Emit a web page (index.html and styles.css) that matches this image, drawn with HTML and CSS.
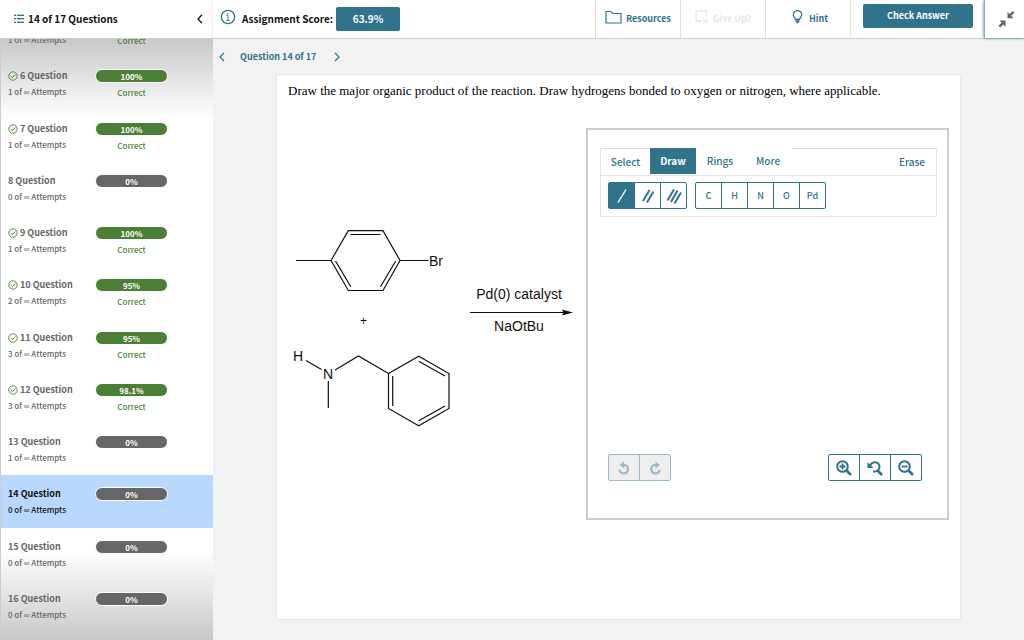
FILE: index.html
```html
<!DOCTYPE html>
<html lang="en">
<head>
<meta charset="utf-8">
<meta name="viewport" content="width=device-width, initial-scale=1">
<title>Question 14 of 17</title>
<link rel="stylesheet" href="styles.css">
</head>
<body>
<svg class="defs" aria-hidden="true">
  <symbol id="check" viewBox="0 0 10 10"><circle cx="5" cy="5" r="4.2" fill="none" stroke="currentColor" stroke-width=".9"/><path d="M2.8 5.2 4.4 6.7 7.3 3.4" fill="none" stroke="currentColor" stroke-width="1"/></symbol>
</svg>
<header class="topbar">
  <div class="topbar-list">
    <svg class="icon" width="10" height="10" viewBox="0 0 10 10" fill="#31738a" aria-hidden="true"><path d="M0 1h2v1H0zM3 1h7v1H3zM0 4h2v1H0zM3 4h7v1H3zM0 8h2v1H0zM3 8h7v1H3z"/><path d="M0 .4h2v1H0zM3 .4h7v1H3zM0 4.400h2v1H0zM3 4.400h7v1H3zM0 7.600h2v1H0zM3 7.600h7v1H3z" opacity=".7"/></svg>
    <h1 class="topbar-title">14 of 17 Questions</h1>
    <button class="bare collapse-list" type="button" aria-label="Collapse question list"><svg width="6" height="10" viewBox="0 0 6 10" fill="none" stroke="#111" stroke-width="1.300"><path d="M5 .8 1 5l4 4.200"/></svg></button>
  </div>
  <div class="score">
    <button class="bare info" type="button" aria-label="Score information"><svg width="16" height="16" viewBox="0 0 16 16" fill="none" stroke="#31738a"><circle cx="8" cy="8" r="6.700" stroke-width="1.300"/><path d="M6.500 6.500H8v5M6.300 11.500h3.500" stroke-width="1"/><path d="M7.300 4.500h1.300" stroke-width="1.300"/></svg></button>
    <span class="score-label">Assignment Score:</span>
    <button class="solid score-value" type="button">63.9%</button>
  </div>
  <div class="actions">
    <button class="action" type="button"><svg width="17" height="14" viewBox="0 0 17 14" fill="none" stroke="currentColor" stroke-width="1.200"><path d="M1 1.500h5l1.500 2H16V13H1z"/></svg>Resources</button>
    <button class="action" type="button" disabled><svg width="14" height="14" viewBox="0 0 14 14" fill="none" stroke="currentColor" stroke-width="1.300"><path d="M11.300 7V1H1v10h6M8.500 9.200l4 4M12.500 9.200l-4 4"/></svg>Give Up?</button>
    <button class="action hint" type="button"><svg width="11" height="14" viewBox="0 0 11 14" fill="none" stroke="currentColor" stroke-width="1.300"><path d="M3.500 9.500C3.500 8 1.300 7.200 1.300 4.800a4.200 4.200 0 0 1 8.400 0C9.700 7.200 7.500 8 7.500 9.500z"/><path d="M3.500 11h4M4.300 12.500h2.400"/></svg>Hint</button>
    <div class="action-check"><button class="solid check-answer" type="button">Check Answer</button></div>
    <button class="bare shrink" type="button" aria-label="Exit full screen"><svg width="17" height="17" viewBox="0 0 17 17" fill="#666"><path d="M9.500 1 11.500 3 14.800 0 16.500 1.700 13.200 4.800 15.500 7.200H9.500zM7.500 9.500v6.200L5.300 13.500 2.200 16.500.5 14.800 3.600 11.800 1.500 9.500z"/></svg></button>
  </div>
</header>
<div class="body">
  <aside class="sidebar" aria-label="Questions">
    <ol class="questions">
      <li class="question"><div><p class="q-title"><svg><use href="#check"/></svg>5 Question</p><p class="q-tries">1 of <span class="inf">∞</span> Attempts</p></div><div class="q-result"><span class="pill good">100%</span><span class="verdict">Correct</span></div></li>
      <li class="question"><div><p class="q-title"><svg><use href="#check"/></svg>6 Question</p><p class="q-tries">1 of <span class="inf">∞</span> Attempts</p></div><div class="q-result"><span class="pill good">100%</span><span class="verdict">Correct</span></div></li>
      <li class="question"><div><p class="q-title"><svg><use href="#check"/></svg>7 Question</p><p class="q-tries">1 of <span class="inf">∞</span> Attempts</p></div><div class="q-result"><span class="pill good">100%</span><span class="verdict">Correct</span></div></li>
      <li class="question"><div><p class="q-title">8 Question</p><p class="q-tries">0 of <span class="inf">∞</span> Attempts</p></div><div class="q-result"><span class="pill">0%</span></div></li>
      <li class="question"><div><p class="q-title"><svg><use href="#check"/></svg>9 Question</p><p class="q-tries">1 of <span class="inf">∞</span> Attempts</p></div><div class="q-result"><span class="pill good">100%</span><span class="verdict">Correct</span></div></li>
      <li class="question"><div><p class="q-title"><svg><use href="#check"/></svg>10 Question</p><p class="q-tries">2 of <span class="inf">∞</span> Attempts</p></div><div class="q-result"><span class="pill good">95%</span><span class="verdict">Correct</span></div></li>
      <li class="question"><div><p class="q-title"><svg><use href="#check"/></svg>11 Question</p><p class="q-tries">3 of <span class="inf">∞</span> Attempts</p></div><div class="q-result"><span class="pill good">95%</span><span class="verdict">Correct</span></div></li>
      <li class="question"><div><p class="q-title"><svg><use href="#check"/></svg>12 Question</p><p class="q-tries">3 of <span class="inf">∞</span> Attempts</p></div><div class="q-result"><span class="pill good">98.1%</span><span class="verdict">Correct</span></div></li>
      <li class="question"><div><p class="q-title">13 Question</p><p class="q-tries">1 of <span class="inf">∞</span> Attempts</p></div><div class="q-result"><span class="pill">0%</span></div></li>
      <li class="question current" aria-current="true"><div><p class="q-title">14 Question</p><p class="q-tries">0 of <span class="inf">∞</span> Attempts</p></div><div class="q-result"><span class="pill">0%</span></div></li>
      <li class="question"><div><p class="q-title">15 Question</p><p class="q-tries">0 of <span class="inf">∞</span> Attempts</p></div><div class="q-result"><span class="pill">0%</span></div></li>
      <li class="question"><div><p class="q-title">16 Question</p><p class="q-tries">0 of <span class="inf">∞</span> Attempts</p></div><div class="q-result"><span class="pill">0%</span></div></li>
    </ol>
  </aside>
  <main class="main">
    <nav class="pager" aria-label="Question">
      <button class="bare" type="button" aria-label="Previous question"><svg width="6" height="10" viewBox="0 0 6 10" fill="none" stroke="#31738a" stroke-width="1.200"><path d="M5 1 1 5l4 4"/></svg></button>
      <span class="pager-label">Question 14 of 17</span>
      <button class="bare" type="button" aria-label="Next question"><svg width="6" height="10" viewBox="0 0 6 10" fill="none" stroke="#31738a" stroke-width="1.200"><path d="m1 1 4 4-4 4"/></svg></button>
    </nav>
    <section class="panel">
      <p class="prompt">Draw the major organic product of the reaction. Draw hydrogens bonded to oxygen or nitrogen, where applicable.</p>
      <div class="work">
        <svg class="scheme" width="290" height="210" viewBox="288 222 290 210" role="img" aria-label="Reaction scheme">
          <g fill="none" stroke="#111" stroke-width="1.200">
            <path d="M296 260.500h35M331 260.500 348.300 230.700h34.700L400 260.500 383 290.500H348.300zM400 260.500h28.500M350.500 234.500H380.500M335.500 261 350.800 286.700M395.700 261 380.500 286.700"/>
            <path d="M306 360.500 321.500 369.500M335 370 358.500 356 388.500 373.500M328.300 381v27M388.500 373.500 418.700 356.200 449 373.500V408.500L418.700 425.700 388.500 408.500zM392.700 376v30M418.700 361.200 445 376M418.700 420.800 445 406"/>
            <path d="M470 312.500h95"/>
          </g>
          <path d="m573 312.500-11-3 1.500 3-1.500 3z" fill="#111"/>
          <g class="atoms">
            <text x="429" y="266">Br</text>
            <text x="293" y="361">H</text>
            <text x="323" y="379">N</text>
            <text x="360" y="325" class="plus">+</text>
            <text x="519" y="299" text-anchor="middle">Pd(0) catalyst</text>
            <text x="519" y="331" text-anchor="middle">NaOtBu</text>
          </g>
        </svg>
        <div class="editor">
          <div class="toolbar">
            <div class="tabs">
              <button class="tab edge" type="button">Select</button>
              <button class="tab active" type="button">Draw</button>
              <button class="tab" type="button">Rings</button>
              <button class="tab" type="button">More</button>
              <div class="tabs-end"><button class="tab" type="button">Erase</button></div>
            </div>
            <div class="tools">
              <div class="group">
                <button class="tool active" type="button" aria-label="Single bond"><svg width="14" height="16" viewBox="0 0 14 16" fill="none" stroke="currentColor" stroke-width="1.400"><path d="m3 14.500 8-13"/></svg></button>
                <button class="tool" type="button" aria-label="Double bond"><svg width="14" height="16" viewBox="0 0 14 16" fill="none" stroke="currentColor" stroke-width="2"><path d="M2 13 8.500 2M6 14.500 12.500 3.500"/></svg></button>
                <button class="tool" type="button" aria-label="Triple bond"><svg width="16" height="16" viewBox="0 0 16 16" fill="none" stroke="currentColor" stroke-width="2"><path d="M1.500 12.500 8 1.500M5 14 11.500 2.500M8.500 15.500 15 4.500"/></svg></button>
              </div>
              <div class="group">
                <button class="tool" type="button">C</button>
                <button class="tool" type="button">H</button>
                <button class="tool" type="button">N</button>
                <button class="tool" type="button">O</button>
                <button class="tool" type="button">Pd</button>
              </div>
            </div>
          </div>
          <div class="footer">
            <div class="group">
              <button class="tool wide" type="button" disabled aria-label="Undo"><svg width="14" height="14" viewBox="0 0 14 14" fill="none" stroke="currentColor" stroke-width="2.200"><path d="M5.500 4H7.500a4.200 4.200 0 1 1-5 4.500"/><path d="M7 .5v7L2.500 4z" fill="currentColor" stroke="none"/></svg></button>
              <button class="tool wide" type="button" disabled aria-label="Redo"><svg width="14" height="14" viewBox="0 0 14 14" fill="none" stroke="currentColor" stroke-width="2.200"><path d="M8.500 4H7a4.200 4.200 0 1 0 4.600 5"/><path d="M7.500 .5v7L12 4z" fill="currentColor" stroke="none"/></svg></button>
            </div>
            <div class="group">
              <button class="tool wide" type="button" aria-label="Zoom in"><svg width="16" height="16" viewBox="0 0 16 16" fill="none" stroke="currentColor" stroke-width="2"><circle cx="6.500" cy="6.500" r="5.300"/><path d="m10.500 10.500 4.500 4.500" stroke-width="2.600"/><path d="M3.500 6.500h6M6.500 3.500v6" stroke-width="1.800"/></svg></button>
              <button class="tool wide" type="button" aria-label="Reset zoom"><svg width="16" height="16" viewBox="0 0 16 16" fill="none" stroke="currentColor" stroke-width="2"><path d="M3.500 5a4.700 4.700 0 1 1 5 6.500H6"/><path d="m10.500 10.500 4.500 4.500" stroke-width="2.600"/><path d="M.5 2v6h6z" fill="currentColor" stroke="none"/></svg></button>
              <button class="tool wide" type="button" aria-label="Zoom out"><svg width="16" height="16" viewBox="0 0 16 16" fill="none" stroke="currentColor" stroke-width="2"><circle cx="6.500" cy="6.500" r="5.300"/><path d="m10.500 10.500 4.500 4.500" stroke-width="2.600"/><path d="M3.500 6.500h6" stroke-width="1.800"/></svg></button>
            </div>
          </div>
        </div>
      </div>
    </section>
  </main>
</div>
</body>
</html>
```
FILE: styles.css
```css
:root {
  --teal: #31738a;
  --grey: #666;
  --green: #4b7f36;
  --line: #ccc;
}
* { box-sizing: border-box; }
body {
  margin: 0;
  height: 100vh;
  display: flex;
  flex-direction: column;
  background: #f2f2f2;
  color: #111;
  font: 10px/14px "Noto Sans CJK SC", "Noto Sans", sans-serif;
  overflow: hidden;
}
p, h1, ol { margin: 0; padding: 0; }
svg { display: block; flex: none; }
.defs { display: none; }
button { font: inherit; color: inherit; margin: 0; padding: 0; cursor: pointer; }
.bare { border: 0; background: none; }
.solid {
  border: 0;
  border-radius: 2px;
  background: var(--teal);
  color: #fff;
  font-weight: 700;
}

.topbar {
  flex: none;
  display: flex;
  height: 39px;
  background: #fff;
  border-bottom: 1px solid var(--line);
}
.topbar-list {
  flex: none;
  width: 213px;
  display: flex;
  align-items: center;
  gap: 4px;
  padding: 0 9px 0 14px;
  border-right: 1px solid #f2f2f2;
}
.topbar-title { font-size: 10px; font-weight: 700; }
.collapse-list { margin-left: auto; }
.score { flex: 1; display: flex; align-items: center; padding-left: 7px; }
.info { margin-right: 6px; padding-bottom: 4px; }
.score-label { font-weight: 700; white-space: nowrap; }
.score-value { width: 64px; height: 24px; margin-left: 3px; }
.actions { display: flex; }
.action {
  width: 85px;
  display: flex;
  align-items: center;
  justify-content: center;
  gap: 4px;
  border: 0;
  border-left: 1px solid #ddd;
  background: none;
  color: var(--teal);
  font-size: 9px;
  font-weight: 700;
}
.action svg { margin-bottom: 4px; }
.action:disabled { color: #e8e8e8; }
.hint { gap: 6px; padding-left: 4px; }
.action-check { width: 134px; padding: 4px 11px 0 12px; border-left: 1px solid #e8e8e8; }
.check-answer { width: 100%; height: 24px; font-size: 9px; }
.shrink {
  width: 40px;
  display: grid;
  place-items: center;
  padding-left: 4px;
  border-left: 1px solid #8ab0bd;
  box-shadow: 0 0 3px #31738a;
}

.body { flex: 1; min-height: 0; display: flex; }
.sidebar {
  flex: none;
  width: 213px;
  display: flex;
  overflow: hidden;
  border-left: 1px solid #ccc;
  background:
    linear-gradient(#c8c8c8, #fff) top / 100% 80px no-repeat,
    linear-gradient(#fff, #c8c8c8) bottom / 100% 90px no-repeat,
    #fff;
}
.questions {
  flex: 1;
  display: grid;
  grid-auto-rows: minmax(52px, 1fr);
  margin: -34px 0 8px;
  list-style: none;
}
.question {
  display: grid;
  grid-template-columns: 87px 73px;
  align-content: start;
  padding: 12px 7px 0;
  color: var(--grey);
}
.current { background: #b8d8fd; color: #111; }
.q-title { display: flex; align-items: center; gap: 2px; font-weight: 700; font-size: 9px; white-space: nowrap; }
.q-title svg { width: 10px; height: 10px; color: var(--green); }
.q-tries { margin-top: 2px; font-size: 8px; font-weight: 500; white-space: nowrap; }
.inf { font-family: "Liberation Sans", sans-serif; }
.q-result { display: grid; justify-items: stretch; align-content: start; text-align: center; }
.pill {
  height: 14px;
  border: 1px solid #fff;
  border-radius: 7px;
  background: var(--grey);
  color: #fff;
  font-size: 8px;
  line-height: 13px;
  font-weight: 700;
}
.good { background: var(--green); }
.verdict { margin-top: 3px; font-size: 8px; font-weight: 500; color: var(--green); }

.main { flex: 1; min-width: 0; display: flex; flex-direction: column; }
.pager {
  display: flex;
  align-items: center;
  gap: 15px;
  height: 36px;
  padding-left: 6px;
  color: var(--teal);
  font-size: 9px;
  font-weight: 700;
}
.pager-label { padding-right: 3px; }
.panel {
  flex: 1;
  margin: 0 64px 21px;
  padding: 8px 11px;
  background: #fff;
  box-shadow: 0 0 2px #ccc;
}
.prompt { font: 13px/16px "Liberation Serif", serif; color: #000; }
.work { display: flex; justify-content: space-between; margin-top: 29px; }
.scheme { margin-top: 94px; }
.atoms { font: 14px "Liberation Sans", sans-serif; fill: #111; }
.plus { font-size: 12px; }
.editor {
  flex: none;
  width: 363px;
  min-height: 392px;
  display: flex;
  flex-direction: column;
  justify-content: space-between;
  padding: 18px 10px 37px 12px;
  border: 2px solid var(--line);
}
.toolbar { color: var(--teal); font-weight: 500; }
.tabs {
  display: flex;
  height: 28px;
  border: 1px solid #e4e4e4;
  border-top: 0;
}
.tab {
  width: 48px;
  height: 26px;
  border: 0;
  background: none;
  font-size: 10px;
}
.edge { width: 49px; border-top: 1px solid #e0e0e0; }
.tab.active { width: 46px; background: var(--teal); color: #fff; font-weight: 700; }
.tabs-end { flex: 1; display: flex; justify-content: flex-end; border-top: 1px solid #e0e0e0; }
.tools {
  display: flex;
  gap: 8px;
  padding: 6px 7px 7px;
  border: 1px solid #e4e4e4;
  border-top: 0;
}
.footer { display: flex; justify-content: space-between; padding: 0 15px 0 8px; }
.group { display: flex; }
.tool {
  width: 27px;
  height: 27px;
  display: grid;
  place-items: center;
  border: 1px solid var(--teal);
  background: #fff;
  color: var(--teal);
  font-size: 9px;
}
.tool + .tool { margin-left: -1px; }
.tool:first-child { border-radius: 2px 0 0 2px; }
.tool:last-child { border-radius: 0 2px 2px 0; }
.tool.active { background: var(--teal); color: #fff; }
.wide { width: 32px; }
.tool:disabled { background: #eee; color: #98bac6; border-color: #98bac6; }
```
